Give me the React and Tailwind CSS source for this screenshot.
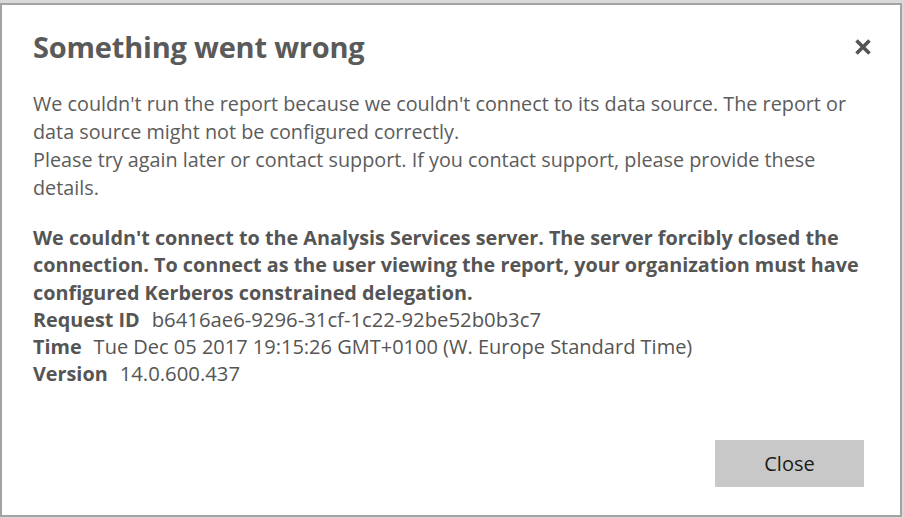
export default function App() {
  return (
    <div className="w-[904px] h-[518px] bg-[#d9d9d9] pt-[3px] pr-[2px] pb-[1px] flex" style={{ fontFamily: '"Open Sans", "Noto Sans", sans-serif' }}>
      <div className="flex-1 bg-white border-2 border-[#a3a3a3] flex flex-col pl-[31px] pr-[28px]">
        <div className="flex items-start justify-between pt-[24px]">
          <h1 className="text-[29px] leading-[36px] font-bold text-[#5a5a5a] tracking-[-0.2px]">Something went wrong</h1>
          <svg width="18" height="18" viewBox="0 0 18 18" className="mt-[9px]">
            <path d="M2.5 2.5 L15.5 15.5 M15.5 2.5 L2.5 15.5" stroke="#555" strokeWidth="3.6" strokeLinecap="butt" />
          </svg>
        </div>
        <div className="mt-[25px] text-[19.8px] leading-[28px] text-[#5c5c5c]">
          <p>We couldn't run the report because we couldn't connect to its data source. The report or data source might not be configured correctly.</p>
          <p>Please try again later or contact support. If you contact support, please provide these details.</p>
        </div>
        <div className="mt-[22px] text-[19.8px] leading-[27.3px] text-[#555]">
          <p className="font-bold">We couldn't connect to the Analysis Services server. The server forcibly closed the connection. To connect as the user viewing the report, your organization must have configured Kerberos constrained delegation.</p>
          <p><span className="font-bold">Request ID</span><span className="ml-[12px] text-[20.3px]">b6416ae6-9296-31cf-1c22-92be52b0b3c7</span></p>
          <p><span className="font-bold">Time</span><span className="ml-[12px] text-[20px]">Tue Dec 05 2017 19:15:26 GMT+0100 (W. Europe Standard Time)</span></p>
          <p><span className="font-bold">Version</span><span className="ml-[12px] text-[20.3px]">14.0.600.437</span></p>
        </div>
        <div className="flex-1" />
        <div className="flex justify-end pb-[28px] pr-[8px]">
          <button className="w-[149px] h-[47px] bg-[#c8c8c8] text-[20px] text-[#1a1a1a]">Close</button>
        </div>
      </div>
    </div>
  );
}
